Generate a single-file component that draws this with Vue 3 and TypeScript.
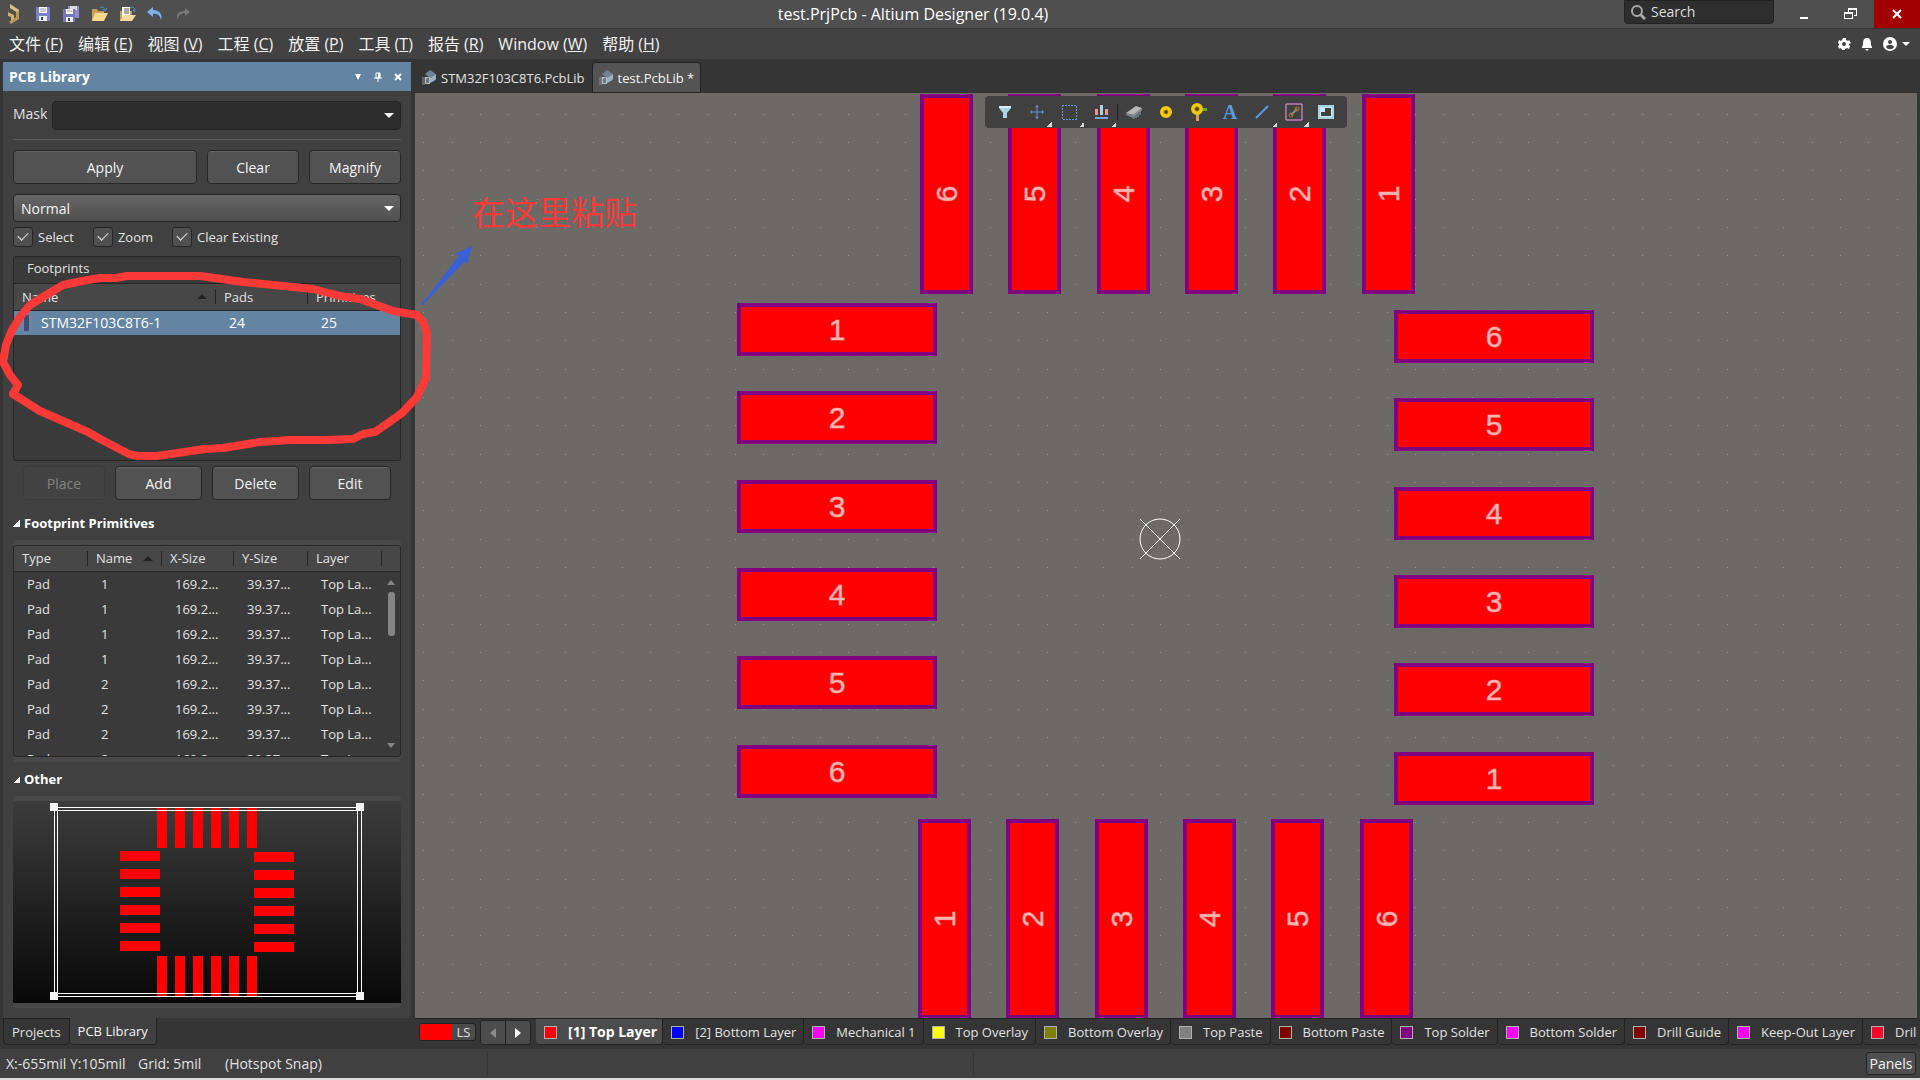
<script setup lang="ts">
interface MenuItem { label: string; key: string }
interface Layer { name: string; color: string; active?: boolean }
interface Pad { x: number; y: number; n: number; vertical: boolean }
interface Bar { x: number; y: number; w: number; h: number }

const menus: MenuItem[] = [
  { label: '文件', key: 'F' },
  { label: '编辑', key: 'E' },
  { label: '视图', key: 'V' },
  { label: '工程', key: 'C' },
  { label: '放置', key: 'P' },
  { label: '工具', key: 'T' },
  { label: '报告', key: 'R' },
  { label: 'Window', key: 'W' },
  { label: '帮助', key: 'H' },
]

const layers: Layer[] = [
  { name: '[1] Top Layer', color: '#ff0000', active: true },
  { name: '[2] Bottom Layer', color: '#0000ff' },
  { name: 'Mechanical 1', color: '#ff00ff' },
  { name: 'Top Overlay', color: '#ffff00' },
  { name: 'Bottom Overlay', color: '#808000' },
  { name: 'Top Paste', color: '#808080' },
  { name: 'Bottom Paste', color: '#800000' },
  { name: 'Top Solder', color: '#800080' },
  { name: 'Bottom Solder', color: '#ff00ff' },
  { name: 'Drill Guide', color: '#800000' },
  { name: 'Keep-Out Layer', color: '#ff00ff' },
  { name: 'Drill Drawing', color: '#ff002a' },
]

const primitives: string[] = ['1', '1', '1', '1', '2', '2', '2', '2']

const steps = [0, 88, 177, 265, 353, 442]
const pads: Pad[] = steps.flatMap((s, i) => [
  { x: 505 + s, y: 1, n: 6 - i, vertical: true },
  { x: 503 + s, y: 726, n: i + 1, vertical: true },
  { x: 322, y: 210 + s, n: i + 1, vertical: false },
  { x: 979, y: 217 + s, n: 6 - i, vertical: false },
])
const padW = (p: Pad): number => (p.vertical ? 53 : 200)
const padH = (p: Pad): number => (p.vertical ? 200 : 53)
const padLabel = (p: Pad): string =>
  `translate(${p.x + Math.floor(padW(p) / 2)} ${p.y + Math.floor(padH(p) / 2)})` + (p.vertical ? ' rotate(-90)' : '')

const bars: Bar[] = [0, 1, 2, 3, 4, 5].flatMap((i) => [
  { x: 144 + 18 * i, y: 7, w: 10, h: 40 },
  { x: 144 + 18 * i, y: 155, w: 10, h: 40 },
  { x: 107, y: 50 + 18 * i, w: 40, h: 10 },
  { x: 241, y: 51 + 18 * i, w: 40, h: 10 },
])

const fine = [0, 6, 11, 17, 23, 28, 34, 40, 45, 51, 57, 62, 68, 74, 79]
const coarse = [0, 28, 57]
const dots = (list: number[]): string =>
  list.flatMap((y) => list.map((x) => `M${x} ${y}h1v1h-1z`)).join('')
const fineDots = dots(fine)
const coarseDots = dots(coarse)
</script>

<template>
  <div class="app">
    <header class="titlebar">
      <div class="quick">
        <svg class="logo" width="14" height="22" viewBox="0 0 14 22"><path d="M3 1l9 6v9l-8 5-2-2 7-5V9L3 5z" fill="#b8985a" /><path d="M3 1l9 6-2 2-7-4z" fill="#d9bf85" /><path d="M1 9l6 3v4l-3 2v-4l-3-1z" fill="#cfb06c" /></svg>
        <button class="qb" aria-label="Save"><svg width="16" height="16" viewBox="0 0 16 16"><path d="M1 1h14v14H1z" fill="#7f81c8" /><path d="M4 1h8v6H4z" fill="#fff" /><path d="M5 3h6M5 5h6" stroke="#999" /><path d="M4 10h8v5H4z" fill="#eee" /><path d="M6 11h2v3H6z" fill="#446" /></svg></button>
        <button class="qb" aria-label="Save all"><svg width="16" height="16" viewBox="0 0 16 16"><path d="M5 0h11v12H5z" fill="#8a8cd0" /><path d="M7 0h7v4H7z" fill="#ddd" /><path d="M0 3h12v13H0z" fill="#7577bd" /><path d="M3 3h7v5H3z" fill="#fff" /><path d="M4 5h5" stroke="#999" /><path d="M3 11h7v5H3z" fill="#eee" /><path d="M5 12h2v3H5z" fill="#446" /></svg></button>
        <button class="qb" aria-label="Open"><svg width="17" height="16" viewBox="0 0 17 16"><path d="M1 3h5l1 2h6v10H1z" fill="#c9a052" /><path d="M4 7h13l-4 8H1z" fill="#f5d990" /><path d="M9 2c3-2 5 0 5 2m-2-1l2 2 2-3" fill="none" stroke="#4d93c7" /></svg></button>
        <button class="qb" aria-label="Open project"><svg width="17" height="16" viewBox="0 0 17 16"><path d="M1 5h12v10H1z" fill="#c9a052" /><path d="M3 1h8v10H3z" fill="#fff" /><path d="M5 3h5M5 5h5M5 7h5" stroke="#555" /><path d="M5 9h12l-4 6H1z" fill="#f5d9a0" /><path d="M11 2c3-2 5 0 5 3m-2-1l2 2" fill="none" stroke="#4d93c7" /></svg></button>
        <button class="qb" aria-label="Undo"><svg width="16" height="14" viewBox="0 0 16 14"><path d="M6 0L0 5l6 5V7c4-1 7 1 8 6 2-6-2-10-8-10z" fill="#7fb0ee" /></svg></button>
        <button class="qb" aria-label="Redo"><svg width="16" height="14" viewBox="0 0 16 14"><path d="M10 1l5 4-5 4V6C6 6 3 8 3 13 0 7 4 4 10 4z" fill="#777" /></svg></button>
      </div>
      <h1>test.PrjPcb - Altium Designer (19.0.4)</h1>
      <div class="winctl">
        <label class="search">
          <svg width="15" height="15" viewBox="0 0 15 15"><circle cx="6" cy="6" r="5" fill="none" stroke="#a8a8a8" stroke-width="2" /><path d="M9 9l5 5" stroke="#a8a8a8" stroke-width="3" /></svg>
          <input type="text" placeholder="Search" aria-label="Search" />
        </label>
        <button class="wb" aria-label="Minimize"><svg width="12" height="12" viewBox="0 0 12 12"><path d="M2 9h8v2H2z" fill="#fff" /></svg></button>
        <button class="wb restore" aria-label="Restore"><svg width="13" height="12" viewBox="0 0 13 12" shape-rendering="crispEdges"><path d="M4 0h9v8h-3V7h2V2H5v2H4z" fill="#fff" /><path d="M0 4h9v7H0zM1 6v4h7V6z" fill="#fff" fill-rule="evenodd" /></svg></button>
        <button class="wb close" aria-label="Close"><svg width="10" height="10" viewBox="0 0 10 10"><path d="M1 1l8 8M9 1l-8 8" stroke="#fff" stroke-width="2" /></svg></button>
      </div>
    </header>

    <nav class="menubar">
      <a v-for="m in menus" :key="m.key" href="#">{{ m.label }} (<u>{{ m.key }}</u>)</a>
      <div class="account">
        <button aria-label="Settings"><svg width="14" height="14" viewBox="0 0 14 14"><path d="M6 1h3v2l2 1 1-1 2 3-2 1v1l1 1-1 3-2-1-2 1v1H5v-1l-2-1-1 1-1-3 1-1V7L1 6l1-3 2 1 1-1z" fill="#fff" /><circle cx="7" cy="7" r="2" fill="#424242" /></svg></button>
        <button aria-label="Notifications"><svg width="12" height="14" viewBox="0 0 12 14"><path d="M5 1h2c3 1 3 4 3 7l1 2v1H1v-1l1-2c0-3 0-6 3-7z" fill="#fff" /><path d="M4 12h4l-2 2z" fill="#fff" /></svg></button>
        <button class="user" aria-label="Account"><svg width="14" height="14" viewBox="0 0 14 14"><circle cx="7" cy="7" r="7" fill="#fff" /><circle cx="7" cy="5" r="2" fill="#424242" /><path d="M3 10c1-3 7-3 8 0-2 3-6 3-8 0z" fill="#424242" /></svg><i class="caret small"></i></button>
      </div>
    </nav>

    <main class="work">
      <aside class="side">
        <section class="panel">
          <header class="phead">
            <h2>PCB Library</h2>
            <button aria-label="Panel menu"><svg width="8" height="8" viewBox="0 0 8 8"><path d="M1 1h6L4 7z" fill="#fff" /></svg></button>
            <button aria-label="Pin"><svg width="8" height="10" viewBox="0 0 8 10"><path d="M2 1h4v5H2zM0 6h8M4 6v4" fill="none" stroke="#fff" /><path d="M4 1h2v5H4z" fill="#fff" /></svg></button>
            <button aria-label="Close panel"><svg width="8" height="8" viewBox="0 0 8 8"><path d="M1 1l6 6M7 1L1 7" stroke="#fff" stroke-width="2" /></svg></button>
          </header>

          <div class="pbody">
            <div class="mask">
              <label for="mask">Mask</label>
              <span class="combo"><select id="mask"><option></option></select><i class="caret"></i></span>
            </div>
            <hr />
            <div class="btns">
              <button class="btn w184">Apply</button>
              <button class="btn grow">Clear</button>
              <button class="btn grow">Magnify</button>
            </div>
            <span class="combo raised"><select aria-label="Highlight mode"><option>Normal</option></select><i class="caret"></i></span>
            <div class="checks">
              <label><input type="checkbox" checked />Select</label>
              <label><input type="checkbox" checked />Zoom</label>
              <label><input type="checkbox" checked />Clear Existing</label>
            </div>

            <div class="group">
              <div class="glabel">Footprints</div>
              <table class="grid foot">
                <colgroup><col class="c1" /><col class="c2" /><col /></colgroup>
                <thead><tr>
                  <th><div>Name<i class="sort"></i></div></th>
                  <th><div>Pads</div></th>
                  <th><div class="last">Primitives</div></th>
                </tr></thead>
                <tbody><tr class="sel">
                  <td><div class="fname"><svg width="16" height="16" viewBox="0 0 16 16"><path d="M4 0h9v16H4z" fill="#3d4d74" /><path d="M4 0h4v16H4z" fill="#7183a8" /><path d="M1 2h3M1 5h3M1 8h3M1 11h3M1 14h3M13 2h3M13 5h3M13 8h3M13 11h3M13 14h3" stroke="#8a8c82" /></svg>STM32F103C8T6-1</div></td>
                  <td>24</td>
                  <td>25</td>
                </tr></tbody>
              </table>
            </div>

            <div class="btns edit">
              <button class="btn w82" disabled>Place</button>
              <button class="btn grow">Add</button>
              <button class="btn grow">Delete</button>
              <button class="btn w82">Edit</button>
            </div>

            <h3><i class="tri"></i>Footprint Primitives</h3>
            <div class="frame">
              <div class="tablebox">
                <table class="grid prim">
                  <colgroup><col class="p1" /><col class="p1" /><col class="p2" /><col class="p1" /><col class="p1" /><col /></colgroup>
                  <thead><tr>
                    <th><div>Type</div></th>
                    <th><div>Name<i class="sort"></i></div></th>
                    <th><div>X-Size</div></th>
                    <th><div>Y-Size</div></th>
                    <th><div>Layer</div></th>
                    <th></th>
                  </tr></thead>
                  <tbody>
                    <tr v-for="(p, i) in primitives" :key="i">
                      <td>Pad</td><td>{{ p }}</td><td>169.2...</td><td>39.37...</td><td>Top La...</td><td></td>
                    </tr>
                  </tbody>
                </table>
                <div class="scroll">
                  <i class="up"></i><i class="thumb"></i><i class="down"></i>
                </div>
              </div>
            </div>

            <h3 class="other"><i class="tri"></i>Other</h3>
            <div class="frame preview">
              <svg width="388" height="202">
                <rect v-for="(b, i) in bars" :key="i" :x="b.x" :y="b.y" :width="b.w" :height="b.h" fill="#ff0000" />
                <g fill="none" stroke="#ffffff" shape-rendering="crispEdges">
                  <path d="M41 6h307v189H41z" />
                  <path d="M44 9h300v183H44z" />
                </g>
                <path d="M37 2h8v8h-8zM343 2h8v8h-8zM37 191h8v8h-8zM343 191h8v8h-8z" fill="#f2f2f2" />
              </svg>
            </div>
          </div>
        </section>
        <div class="ptabs">
          <button>Projects</button>
          <button class="on">PCB Library</button>
        </div>
      </aside>

      <section class="editor">
        <div class="docs">
          <button v-for="(d, i) in ['STM32F103C8T6.PcbLib', 'test.PcbLib *']" :key="d" :class="{ on: i === 1 }">
            <svg width="15" height="15" viewBox="0 0 15 15"><path d="M3 4l5-4 6 4-6 4z" fill="#6e8298" /><path d="M8 8l6-4v5l-2 2-4 2z" fill="#9eb2c6" /><path d="M3 7h5v7H3z" fill="#b9c0c7" /><path d="M4 9l3-2v6H4z" fill="#687582" /><path d="M0 8h3M0 10h3M0 12h3M0 14h3" stroke="#8e9499" /></svg>
            {{ d }}
          </button>
        </div>

        <div class="canvas">
          <svg class="board" width="100%" height="100%">
            <defs>
              <pattern id="dots" x="65" y="49" width="85" height="85" patternUnits="userSpaceOnUse">
                <path :d="fineDots" fill="#686462" />
                <path :d="coarseDots" fill="#95918e" />
              </pattern>
            </defs>
            <rect width="100%" height="100%" fill="url(#dots)" />
            <g v-for="(p, i) in pads" :key="i">
              <rect :x="p.x + 2" :y="p.y + 2" :width="padW(p) - 4" :height="padH(p) - 4" fill="#ff0000" stroke="#800080" stroke-width="4" />
              <text :transform="padLabel(p)" y="11" text-anchor="middle">{{ p.n }}</text>
            </g>
            <g fill="none" stroke="#ffffff">
              <circle cx="745" cy="446" r="20" />
              <path d="M725 426l40 40M765 426l-40 40" />
            </g>
          </svg>

          <div class="toolbar">
            <button aria-label="Filter"><svg width="16" height="16" viewBox="0 0 16 16"><path d="M2 2h12v2l-4 5v5H6V9L2 4z" fill="#a9d4e6" /><path d="M2 2h12v2H2z" fill="#d6edf5" /></svg></button>
            <button class="more" aria-label="Snap"><svg width="16" height="16" viewBox="0 0 16 16"><path d="M8 2v12M2 8h12" stroke="#6f92dc" /><path d="M6 3h4L8 1zM6 13h4l-2 2zM3 6v4L1 8zM13 6v4l2-2z" fill="#6f92dc" /></svg></button>
            <button class="more" aria-label="Selection"><svg width="16" height="16" viewBox="0 0 16 16" shape-rendering="crispEdges"><path d="M1 1h14v14H1z" fill="none" stroke="#6f92dc" stroke-dasharray="2 1" /></svg></button>
            <button class="more" aria-label="Align"><svg width="16" height="16" viewBox="0 0 16 16"><path d="M2 5h3v6H2zM12 5h3v6h-3z" fill="#f09090" /><path d="M7 1h3v10H7z" fill="#a9d4e6" /><path d="M2 13h13v2H2z" fill="#7fa5e0" /></svg></button>
            <i class="sep"></i>
            <button aria-label="Component"><svg width="16" height="16" viewBox="0 0 16 16"><path d="M0 9l10-7 6 2-9 7z" fill="#b8b8b8" /><path d="M0 9l7 2v3l-7-3z" fill="#808080" /><path d="M7 11l9-7v2l-9 7z" fill="#909090" /><path d="M8 11v4M10 10v4M12 9v4M14 7v4" stroke="#82a9b8" /></svg></button>
            <button aria-label="Pad"><svg width="16" height="16" viewBox="0 0 16 16"><circle cx="8" cy="8" r="4" fill="none" stroke="#f4c80e" stroke-width="4" /><circle cx="8" cy="8" r="2" fill="none" stroke="#a47b00" /></svg></button>
            <button aria-label="Via"><svg width="18" height="18" viewBox="0 0 18 18"><path d="M7 10h3v8H7z" fill="#e69a4e" /><path d="M11 5h7v3h-7z" fill="#58b51e" /><circle cx="8" cy="6" r="4" fill="none" stroke="#f4c80e" stroke-width="4" /><circle cx="8" cy="6" r="2" fill="none" stroke="#8e6a00" /></svg></button>
            <button class="glyph" aria-label="String">A</button>
            <button class="more" aria-label="Line"><svg width="16" height="16" viewBox="0 0 16 16"><path d="M2 14L14 2" stroke="#5c9ae4" stroke-width="2" /></svg></button>
            <button class="more" aria-label="Dimension"><svg width="16" height="16" viewBox="0 0 16 16" overflow="visible"><path d="M0 0h16v16H0z" fill="none" stroke="#eaa0e0" /><path d="M5 11l6-6" stroke="#858b8e" stroke-width="2" /><circle cx="5" cy="11" r="2" fill="none" stroke="#b27a20" /><circle cx="11" cy="5" r="2" fill="none" stroke="#b27a20" /></svg></button>
            <button aria-label="Region"><svg width="16" height="16" viewBox="0 0 16 16"><path d="M0 1h16v14H0z" fill="#c8eaf5" /><path d="M7 4h6v8H3V8h4z" fill="#404040" /><path d="M1 2h14v12H1z" fill="none" stroke="#88b8d0" /></svg></button>
          </div>
        </div>

        <div class="layers">
          <button class="ls"><i></i><span>LS</span></button>
          <div class="nav">
            <button aria-label="Previous layer"><svg width="6" height="10" viewBox="0 0 6 10"><path d="M6 0v10L0 5z" fill="#8a8a8a" /></svg></button>
            <button aria-label="Next layer"><svg width="6" height="10" viewBox="0 0 6 10"><path d="M0 0v10l6-5z" fill="#fff" /></svg></button>
          </div>
          <div class="ltabs">
            <button v-for="l in layers" :key="l.name" :class="{ on: l.active }">
              <i :style="{ background: l.color }"></i>{{ l.name }}
            </button>
          </div>
        </div>
      </section>
    </main>

    <footer class="status">
      <span class="pos">X:-655mil Y:105mil</span>
      <span class="snapgrid">Grid: 5mil</span>
      <span class="hot">(Hotspot Snap)</span>
      <span class="cell"></span>
      <button class="panels">Panels</button>
    </footer>
    <div class="edge"></div>

    <svg class="notes" width="660" height="480">
      <path class="ring" d="M30 305L43 297L63 285L82 281L100 278L115 278L127 276L200 276L243 282L313 289L340 296L360 299L393 311L417 315L423 322L427 333L426 378L417 397L402 413L388 423L375 432L363 434L353 439L327 440L290 440L260 442L223 448L205 449L157 456L138 456L129 454L102 440L88 432L40 411L13 394L18 385L10 375L3 362L6 345L12 330L20 317L30 305" />
      <path d="M421 305L459 256L455 254L472 246L467 264L464 262L423 305z" fill="#3a5fd6" />
      <text x="472" y="225">在这里粘贴</text>
    </svg>
  </div>
</template>

<style>
body {
  margin: 0;
  background: #353535;
}
</style>

<style scoped>
.app {
  position: relative;
  display: flex;
  flex-direction: column;
  height: 100vh;
  overflow: hidden;
  background: #353535;
  color: #e2e2e2;
  font: 14px/20px "Open Sans", "Noto Sans", "Noto Sans CJK SC", sans-serif;
}
.app *, .app *::before, .app *::after { box-sizing: border-box; }
button, select, input {
  margin: 0;
  padding: 0;
  border: 0;
  background: none;
  color: inherit;
  font: inherit;
}
button { display: flex; align-items: center; justify-content: center; white-space: nowrap; }
svg { display: block; flex: none; }
h1, h2, h3 { margin: 0; font-size: inherit; }
i { display: block; flex: none; }
.caret { width: 0; border: 5px solid transparent; border-top-color: #fff; border-bottom: 0; }
.caret.small { border-width: 4px 4px 0; }

.titlebar {
  position: relative;
  display: flex;
  justify-content: space-between;
  height: 29px;
  flex: none;
  background: #4f4f4f;
  border-bottom: 1px solid #333;
}
.quick { display: flex; align-items: center; padding-left: 7px; }
.logo { margin-right: 8px; }
.qb { width: 28px; height: 28px; }
h1 {
  position: absolute;
  inset: 0;
  margin: auto;
  width: max-content;
  height: 28px;
  padding-right: 94px;
  font-weight: 400;
  font-size: 16px;
  line-height: 28px;
  color: #fff;
}
.winctl { display: flex; align-items: stretch; }
.search {
  display: flex;
  align-items: center;
  gap: 5px;
  width: 150px;
  height: 24px;
  margin-right: 7px;
  padding-left: 6px;
  background: #2e2e2e;
  border: 1px solid #222;
  border-radius: 0 0 4px 4px;
}
.search input { width: 100px; outline: 0; }
.search input::placeholder { color: #ddd; opacity: 1; }
.wb { width: 46px; }
.wb.restore { width: 47px; }
.wb.close { background: #a30000; }

.menubar {
  display: flex;
  align-items: center;
  gap: 15px;
  height: 30px;
  flex: none;
  padding: 0 10px 0 9px;
  background: #424242;
  font-size: 16px;
}
.menubar a { color: #f0f0f0; text-decoration: none; white-space: nowrap; }
.account { display: flex; gap: 10px; margin-left: auto; }
.user { gap: 5px; }

.work { display: flex; flex: 1; min-height: 0; }
.side { display: flex; flex-direction: column; width: 408px; flex: none; margin: 3px 4px 0 3px; }
.panel { display: flex; flex-direction: column; flex: 1; min-height: 0; background: #404040; }
.phead {
  display: flex;
  align-items: center;
  gap: 12px;
  height: 29px;
  flex: none;
  padding: 0 9px 0 6px;
  background: #6384a3;
  color: #fff;
}
.phead h2 { flex: 1; font-weight: 700; }
.pbody { display: flex; flex-direction: column; flex: 1; min-height: 0; padding: 10px; }
.mask { display: flex; align-items: center; gap: 5px; }
.mask label { line-height: 26px; align-self: flex-start; }
.combo { position: relative; display: block; flex: 1; }
.combo select {
  display: block;
  width: 100%;
  height: 29px;
  padding: 0 7px;
  appearance: none;
  background: #2d2d2d;
  border: 1px solid #232323;
  border-radius: 4px;
}
.combo .caret { position: absolute; right: 7px; top: 12px; pointer-events: none; }
.combo.raised { flex: none; }
.combo.raised select {
  height: 28px;
  padding-top: 2px;
  background: linear-gradient(#656565, #505050);
  color: #f4f4f4;
}
hr { width: 100%; height: 1px; margin: 9px 0 10px; border: 0; background: #5a5a5a; }
.btns { display: flex; gap: 10px; margin-bottom: 10px; }
.btn {
  height: 34px;
  padding-top: 2px;
  background: #525252;
  border: 1px solid #262626;
  border-radius: 4px;
  box-shadow: inset 0 1px #646464;
  color: #f4f4f4;
}
.btn:disabled { background: #434343; border-color: #3b3b3b; box-shadow: none; color: #858585; }
.w184 { width: 184px; }
.w82 { width: 82px; }
.grow { flex: 1; }
.checks { display: flex; gap: 19px; margin: 5px 0 9px; font-size: 13px; }
.checks label { display: flex; align-items: center; gap: 5px; }
.checks input {
  width: 20px;
  height: 20px;
  appearance: none;
  border: 1px solid #262626;
  border-radius: 3px;
  background: #505050;
}
.checks input::before {
  content: "";
  display: block;
  width: 10px;
  height: 6px;
  margin: 4px;
  border: solid #e8e8e8;
  border-width: 0 0 1px 1px;
  transform: rotate(-45deg);
}
.group {
  height: 205px;
  flex: none;
  border: 1px solid #262626;
  border-radius: 3px;
  background: #3a3a3a;
}
.glabel { height: 27px; padding: 0 13px; font-size: 13px; line-height: 22px; border-bottom: 1px solid #262626; }
.grid { width: 100%; table-layout: fixed; border-collapse: collapse; }
.grid th {
  height: 25px;
  padding: 0;
  background: #474747;
  border-bottom: 1px solid #262626;
  font-size: 13px;
  font-weight: 400;
  text-align: left;
}
.grid.foot th { height: 26px; }
.grid th div {
  display: flex;
  align-items: center;
  justify-content: space-between;
  height: 15px;
  padding: 0 8px;
  border-right: 1px solid #262626;
}
.grid th div.last { border-right: 0; }
.grid td { height: 25px; padding: 0 0 0 13px; white-space: nowrap; overflow: hidden; }
.grid.prim td { font-size: 13px; }
.c1 { width: 202px; }
.c2 { width: 92px; }
.p1 { width: 74px; }
.p2 { width: 72px; }
.sort { border: 5px solid transparent; border-top: 0; border-bottom-color: #222; }
.sel { background: #6384a3; color: #fff; }
.grid td .fname { display: flex; align-items: center; gap: 9px; margin-left: -11px; }
.btns.edit { margin: 5px 10px 13px; }
h3 { display: flex; align-items: center; gap: 4px; height: 20px; color: #fff; font-size: 13px; font-weight: 700; }
.tri { width: 7px; height: 7px; background: linear-gradient(135deg, transparent 50%, #fff 50%); }
.frame { margin-top: 7px; padding: 5px 0; border-radius: 4px; background: #484848; }
.tablebox {
  position: relative;
  height: 212px;
  overflow: hidden;
  border: 1px solid #262626;
  border-radius: 3px;
  background: #3a3a3a;
}
.scroll {
  position: absolute;
  right: 0;
  top: 26px;
  bottom: 0;
  display: flex;
  flex-direction: column;
  align-items: center;
  width: 18px;
  padding: 8px 0;
}
.up { border: 4px solid transparent; border-top: 0; border-bottom: 5px solid #858585; }
.thumb { width: 7px; height: 44px; margin-top: 7px; border-radius: 3px; background: #858585; }
.down { margin-top: auto; border: 4px solid transparent; border-bottom: 0; border-top: 5px solid #858585; }
.other { margin-top: 7px; }
.preview { flex: 1; min-height: 0; display: flex; }
.preview svg { width: 100%; height: 100%; background: linear-gradient(#3c3c3c, #080808); }

.ptabs { display: flex; height: 31px; flex: none; font-size: 13px; }
.ptabs button {
  height: 27px;
  padding: 0 8px;
  border: 1px solid #222;
  border-radius: 0 0 4px 4px;
}
.ptabs .on { border-left: 0; border-top: 0; background: #404040; color: #f4f4f4; }

.editor { display: flex; flex-direction: column; flex: 1; min-width: 0; padding: 3px 3px 0 0; }
.docs { display: flex; height: 31px; flex: none; font-size: 13px; }
.docs button { gap: 4px; padding: 0 6px; border: 1px solid transparent; border-radius: 4px 4px 0 0; }
.docs .on { background: #545454; border-color: #222; color: #f4f4f4; }
.canvas { position: relative; flex: 1; min-height: 0; background: #6d6967; overflow: hidden; }
.board { position: absolute; inset: 0; }
.board text {
  font: 30px "Liberation Sans", Arial, sans-serif;
  fill: #ffb4b4;
  stroke: rgb(255 180 180 / 50%);
  stroke-width: 1px;
}
.toolbar {
  position: absolute;
  left: 50%;
  top: 3px;
  display: flex;
  transform: translateX(-50%);
  height: 32px;
  padding: 0 5px 0 4px;
  border-radius: 4px;
  background: #404040;
}
.toolbar button { position: relative; width: 32px; height: 32px; }
.more::after {
  content: "";
  position: absolute;
  right: 1px;
  bottom: 1px;
  width: 5px;
  height: 5px;
  background: linear-gradient(135deg, transparent 50%, #d8d8d8 50%);
}
.sep { width: 1px; height: 16px; margin: 8px 0; background: #222; }
.toolbar .glyph { font: bold 20px "Liberation Serif", serif; color: #5c9ae4; }

.layers { display: flex; height: 31px; flex: none; border-top: 1px solid #222; }
.ls {
  width: 57px;
  height: 18px;
  margin: 4px 4px 0;
  border: 1px solid #222;
  border-radius: 3px;
  background: #4c4c4c;
  overflow: hidden;
}
.ls i { width: 32px; height: 16px; background: #ff0000; }
.ls span { flex: 1; font-size: 13px; line-height: 16px; }
.nav { display: flex; width: 51px; height: 25px; margin: 1px 5px 0 0; border: 1px solid #222; border-radius: 3px; background: #4c4c4c; }
.nav button { flex: 1; }
.nav button + button { border-left: 1px solid #222; }
.ltabs { display: flex; flex: 1; min-width: 0; overflow: hidden; font-size: 13px; }
.ltabs button {
  gap: 11px;
  height: 26px;
  flex: none;
  padding: 1px 7px 0 8px;
  border: 1px solid #222;
  border-width: 0 1px 1px 0;
  border-radius: 0 0 4px 4px;
}
.ltabs i { width: 13px; height: 13px; border: 1px solid #b0b0b0; }
.ltabs .on { padding-right: 5px; background: #4c4c4c; color: #fff; font-size: 14px; font-weight: 700; }

.status { display: flex; align-items: center; height: 29px; flex: none; padding: 0 4px 0 6px; background: #404040; }
.pos { width: 132px; }
.snapgrid { width: 87px; }
.hot { width: 262px; }
.cell { width: 487px; height: 23px; border: 1px solid #353535; border-width: 0 1px; }
.panels {
  width: 50px;
  height: 23px;
  margin-left: auto;
  border: 1px solid #222;
  border-radius: 3px;
  background: #505050;
  color: #f4f4f4;
}
.edge { height: 2px; flex: none; background: #dcdcdc; }

.notes { position: absolute; left: 0; top: 0; pointer-events: none; }
.ring { fill: none; stroke: #fb3a38; stroke-width: 8px; stroke-linejoin: round; stroke-linecap: round; }
.notes text { font: 33px "Noto Sans CJK SC", sans-serif; fill: #fb3a38; }
</style>
